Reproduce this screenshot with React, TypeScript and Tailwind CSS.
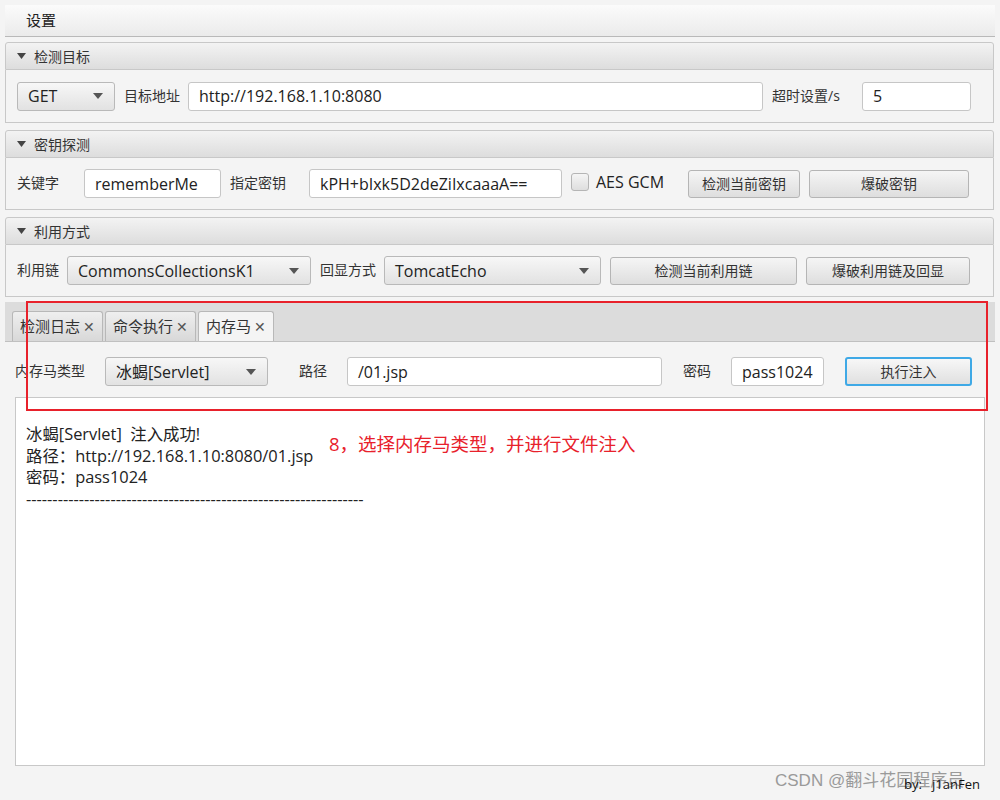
import React from "react";

const font = "font-['Open_Sans','Noto_Sans_CJK_SC',sans-serif]";

function Arrow() {
  return (
    <svg width="10" height="6" viewBox="0 0 10 6" className="shrink-0">
      <path d="M0 0 L10 0 L5 6 Z" fill="#555" />
    </svg>
  );
}

function Combo({ w, text }: { w: string; text: string }) {
  return (
    <div
      className={`${w} h-[29px] shrink-0 flex items-center justify-between pl-[10px] pr-[11px] rounded-[3px] border border-[#b9b9b9] bg-linear-to-b from-[#f7f7f7] to-[#e2e2e2] text-[16px] text-[#222]`}
    >
      <span>{text}</span>
      <Arrow />
    </div>
  );
}

function Input({ w, text }: { w: string; text: string }) {
  return (
    <div
      className={`${w} h-[29px] shrink-0 flex items-center px-[10px] rounded-[3px] border border-[#c6c6c6] bg-white text-[16px] text-[#222] overflow-hidden whitespace-nowrap`}
    >
      {text}
    </div>
  );
}

function Button({ w, text, cls = "" }: { w: string; text: string; cls?: string }) {
  return (
    <div
      className={`${w} h-[28px] shrink-0 flex items-center justify-center rounded-[3px] border border-[#b5b5b5] bg-linear-to-b from-[#f5f5f5] to-[#dedede] text-[14px] text-[#333] ${cls}`}
    >
      {text}
    </div>
  );
}

function Label({ w, text, cls = "" }: { w: string; text: string; cls?: string }) {
  return <div className={`${w} shrink-0 text-[14px] text-[#333] leading-none ${cls}`}>{text}</div>;
}

function Section({ title, h, children }: { title: string; h: string; children: React.ReactNode }) {
  return (
    <div className="flex flex-col">
      <div className="h-[28px] flex items-center rounded-t-[3px] border border-[#c8c8c8] bg-linear-to-b from-[#f3f3f3] to-[#dddddd]">
        <svg width="9" height="6" viewBox="0 0 9 6" className="ml-[11px] mr-[8px]">
          <path d="M0 0 L9 0 L4.5 6 Z" fill="#444" />
        </svg>
        <span className="text-[14px] text-[#333]">{title}</span>
      </div>
      <div className={`${h} flex items-center pl-[11px] border border-t-0 border-[#c8c8c8] bg-[#f4f4f4]`}>
        {children}
      </div>
    </div>
  );
}

function Tab({ text, active = false }: { text: string; active?: boolean }) {
  return (
    <div
      className={`h-[30px] flex items-center px-[7px] rounded-t-[3px] border border-b-0 border-[#b8b8b8] text-[15px] text-[#333] ${
        active ? "bg-[#f4f4f4]" : "bg-linear-to-b from-[#efefef] to-[#d8d8d8]"
      }`}
    >
      <span>{text}</span>
      <span className="ml-[3px] text-[14px] text-[#555]">✕</span>
    </div>
  );
}

export default function App() {
  return (
    <div className={`relative w-[1000px] h-[800px] bg-[#f4f4f4] pt-[5px] px-[5px] overflow-hidden ${font}`}>
      {/* menu bar */}
      <div className="h-[32px] flex items-center pl-[21px] border-b border-[#b9b9b9] bg-linear-to-b from-[#fbfbfb] to-[#ebebeb] text-[15px] text-[#222]">
        设置
      </div>

      <div className="mt-[5px] mr-[1px] flex flex-col gap-[7px]">
        <Section title="检测目标" h="h-[53px]">
          <Combo w="w-[98px]" text="GET" />
          <Label w="w-[64px]" text="目标地址" cls="ml-[9px] pb-[1px]" />
          <Input w="w-[575px]" text="http://192.168.1.10:8080" />
          <Label w="w-[90px]" text="超时设置/s" cls="ml-[9px] pb-[1px]" />
          <Input w="w-[109px]" text="5" />
        </Section>

        <Section title="密钥探测" h="h-[52px]">
          <Label w="w-[67px]" text="关键字" cls="pb-[1px]" />
          <Input w="w-[137px]" text="rememberMe" />
          <Label w="w-[79px]" text="指定密钥" cls="ml-[9px] pb-[1px]" />
          <Input w="w-[253px]" text="kPH+bIxk5D2deZiIxcaaaA==" />
          <div className="ml-[9px] w-[18px] h-[18px] shrink-0 mb-[4px] rounded-[3px] border border-[#b5b5b5] bg-linear-to-b from-[#f5f5f5] to-[#dedede]" />
          <div className="ml-[7px] w-[92px] shrink-0 text-[16px] text-[#222] pb-[4px]">AES GCM</div>
          <Button w="w-[112px]" text="检测当前密钥" />
          <Button w="w-[160px]" text="爆破密钥" cls="ml-[9px]" />
        </Section>

        <Section title="利用方式" h="h-[52px]">
          <Label w="w-[50px]" text="利用链" cls="pb-[1px]" />
          <Combo w="w-[244px]" text="CommonsCollectionsK1" />
          <Label w="w-[64px]" text="回显方式" cls="ml-[9px] pb-[1px]" />
          <Combo w="w-[217px]" text="TomcatEcho" />
          <Button w="w-[187px]" text="检测当前利用链" cls="ml-[9px]" />
          <Button w="w-[164px]" text="爆破利用链及回显" cls="ml-[9px]" />
        </Section>
      </div>

      {/* tab pane */}
      <div className="mt-[5px] flex flex-col">
        <div className="h-[40px] flex items-end gap-[2px] pl-[7px] bg-[#dcdcdc] border-b border-[#c0c0c0]">
          <Tab text="检测日志" />
          <Tab text="命令执行" />
          <Tab text="内存马" active />
        </div>
        <div className="flex flex-col">
          <div className="mt-[15px] h-[29px] flex items-center pl-[10px]">
            <Label w="w-[90px]" text="内存马类型" cls="pb-[2px]" />
            <Combo w="w-[163px]" text="冰蝎[Servlet]" />
            <Label w="w-[48px]" text="路径" cls="ml-[31px] pb-[2px]" />
            <Input w="w-[315px]" text="/01.jsp" />
            <Label w="w-[48px]" text="密码" cls="ml-[21px] pb-[2px]" />
            <Input w="w-[93px]" text="pass1024" />
            <div className="ml-[21px] w-[127px] h-[29px] shrink-0 flex items-center justify-center rounded-[3px] border-2 border-[#3fa9e6] bg-linear-to-b from-[#f7f7f7] to-[#e0e0e0] text-[14px] text-[#333]">
              执行注入
            </div>
          </div>
          <div className="mt-[11px] ml-[10px] w-[970px] h-[369px] border border-[#c8c8c8] bg-white pt-[25px] pl-[10px] text-[16.4px] leading-[21.6px] text-[#222]">
            <div>冰蝎[Servlet]&nbsp; 注入成功!</div>
            <div>路径：http://192.168.1.10:8080/01.jsp</div>
            <div>密码：pass1024</div>
            <div>----------------------------------------------------------------</div>
          </div>
        </div>
      </div>

      {/* annotation overlay */}
      <div className="absolute left-[26px] top-[301px] w-[962px] h-[110px] border-2 border-[#e8212b] pointer-events-none" />
      <div className="absolute left-[329px] top-[431px] text-[18.5px] text-[#e8212b] leading-[26px]">
        8，选择内存马类型，并进行文件注入
      </div>

      {/* watermark */}
      <div className="absolute left-[775px] top-[768px] text-[17px] text-[#9a9a9a] font-['Liberation_Sans','Noto_Sans_CJK_SC',sans-serif]">
        CSDN @翻斗花园程序员
      </div>
      <div className="absolute left-[904px] top-[775px] text-[13px] text-[#111]">by:&nbsp;&nbsp; j1anFen</div>
    </div>
  );
}
